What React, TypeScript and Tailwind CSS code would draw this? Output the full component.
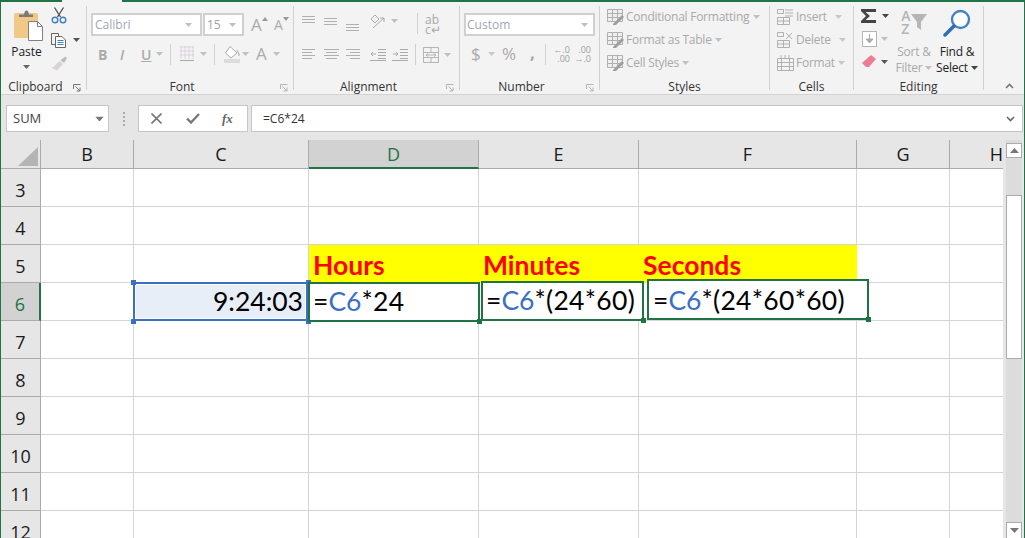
import React from "react";

function Caret({ color = "#a8a8a8", className = "" }: { color?: string; className?: string }) {
  return (
    <svg width="7" height="4" viewBox="0 0 7 4" className={"shrink-0 " + className}>
      <path d="M0 0H7L3.5 4Z" fill={color} />
    </svg>
  );
}

function Launcher({ dark = false }: { dark?: boolean }) {
  const c = dark ? "#777" : "#b5b5b5";
  return (
    <svg width="8" height="8" viewBox="0 0 8 8" className="absolute right-[5px] bottom-[-2px]">
      <path d="M.5 5V.5H7.500M.5 .5" stroke={c} fill="none" />
      <path d="M2.500 2.500L7 7M7 3.500V7H3.500" stroke={c} fill="none" />
    </svg>
  );
}

function Lines({ rows, w = 15, h = 12 }: { rows: [number, number, number][]; w?: number; h?: number }) {
  return (
    <svg width={w} height={h} viewBox={`0 0 ${w} ${h}`} className="shrink-0">
      {rows.map(([x1, x2, y], i) => (
        <path key={i} d={`M${x1} ${y + 0.5}H${x2}`} stroke="#b0b0b0" />
      ))}
    </svg>
  );
}

function Group({
  w,
  label,
  launcher,
  dark,
  children,
}: {
  w: string;
  label: string;
  launcher?: boolean;
  dark?: boolean;
  children: React.ReactNode;
}) {
  return (
    <div className={"relative flex flex-col h-[84px] mt-[4px] border-r border-[#d0d0d0] shrink-0 " + w}>
      <div className="h-[72px] flex flex-col">{children}</div>
      <div className={"h-[12px] leading-[18px] text-center text-[12px] text-[#333] " + (launcher ? "pr-[16px]" : "")}>{label}</div>
      {launcher && <Launcher dark={dark} />}
    </div>
  );
}

function Clipboard() {
  return (
    <Group w="w-[86px]" label="Clipboard" launcher dark>
      <div className="flex">
        <div className="w-[48px] flex flex-col items-center pl-[3px] pt-[4px]">
          <svg width="30" height="31" viewBox="0 0 30 31" className="ml-[4px]">
            <rect x="0" y="3" width="24" height="25" rx="1.500" fill="#efc985" />
            <path d="M5 7V4.500H10Q10.500 .5 12.500 .5T15 4.500H19V7Z" fill="#7b7b7b" />
            <path d="M14.500 11.500H23.500L28.500 16.500V30.500H14.500Z" fill="#fff" stroke="#808080" />
            <path d="M23.500 11.500V16.500H28.500" fill="none" stroke="#808080" />
          </svg>
          <span className="text-[12px] leading-[16px] text-[#222] mt-[3px]">Paste</span>
          <Caret color="#666" className="mt-[5px]" />
        </div>
        <div className="flex flex-col pl-[2px] pt-[1px]">
          <svg width="16" height="17" viewBox="0 0 16 17">
            <path d="M3.500 .5L9.500 10M12.500 .5L6.500 10" stroke="#555" strokeWidth="1.400" fill="none" />
            <circle cx="4" cy="13" r="2.800" fill="none" stroke="#3f7fc0" strokeWidth="1.400" />
            <circle cx="12" cy="13" r="2.800" fill="none" stroke="#3f7fc0" strokeWidth="1.400" />
          </svg>
          <div className="flex items-center mt-[9px]">
            <svg width="16" height="15" viewBox="0 0 16 15">
              <path d="M.5 .5H7.500V3.500M4 11.500H.5V.5" fill="none" stroke="#666" />
              <path d="M4.500 3.500H11L14.500 7V14.500H4.500Z" fill="#fff" stroke="#666" />
              <path d="M6.500 7.500H12.500M6.500 9.500H12.500M6.500 11.500H12.500" stroke="#3f7fc0" />
            </svg>
            <Caret color="#555" className="ml-[6px] -mt-[1px]" />
          </div>
          <svg width="17" height="15" viewBox="0 0 17 15" className="mt-[8px]">
            <path d="M9 5L12 8L6 14.500L.5 11.500C3 11 5 9 5 8Z" fill="#d9d5d5" />
            <path d="M9.500 4L14.500 .5L16 2L13 7Z" fill="#bdb9b9" />
          </svg>
        </div>
      </div>
    </Group>
  );
}

function Font() {
  return (
    <Group w="w-[207px]" label="Font" launcher>
      <div className="flex items-center mt-[7px] h-[23px] pl-[4px]">
        <div className="w-[111px] h-[23px] border-2 border-[#d0d0d0] bg-white flex items-center justify-between pl-[2px] pr-[8px]">
          <span className="text-[12px] text-[#9ea7b3]">Calibri</span>
          <Caret color="#c0c0c0" />
        </div>
        <div className="w-[41px] h-[23px] ml-[1px] border-2 border-[#d0d0d0] bg-white flex items-center justify-between pl-[2px] pr-[6px]">
          <span className="text-[12px] text-[#a49db0]">15</span>
          <Caret color="#c0c0c0" />
        </div>
        <span className="ml-[7px] w-[22px] flex items-start text-[17px] leading-[20px] text-[#ababab]">
          A<svg width="6" height="4" viewBox="0 0 6 4" className="mt-[2px]"><path d="M0 4H6L3 0Z" fill="#999" /></svg>
        </span>
        <span className="ml-[1px] flex items-start text-[14px] leading-[20px] text-[#ababab]">
          A<svg width="6" height="4" viewBox="0 0 6 4" className="mt-[2px]"><path d="M0 0H6L3 4Z" fill="#999" /></svg>
        </span>
      </div>
      <div className="flex items-center mt-[7px] h-[22px] pl-[10px] text-[#ababab]">
        <span className="w-[21px] text-[14px] font-bold pl-[1px]">B</span>
        <span className="w-[21px] text-[14px] italic font-semibold pl-[2px]">I</span>
        <span className="w-[17px] text-[14px] font-semibold underline pl-[2px]">U</span>
        <Caret color="#c0c0c0" />
        <div className="ml-[7px] w-px h-[21px] bg-[#d0d0d0]" />
        <svg width="14" height="16" viewBox="0 0 14 16" className="ml-[9px]">
          <path d="M.5 1H14M.5 5H14M.5 9H14M1 .5V13M5 .5V13M9 .5V13M13 .5V13" stroke="#c9b6c9" strokeDasharray="1 1" />
          <path d="M0 14.500H14" stroke="#a9a9a9" />
        </svg>
        <Caret color="#c0c0c0" className="ml-[6px]" />
        <div className="ml-[7px] w-px h-[21px] bg-[#d0d0d0]" />
        <svg width="16" height="17" viewBox="0 0 16 17" className="ml-[9px]">
          <path d="M6 .5L13 7L7 12L1.500 7Z" fill="#fff" stroke="#ababab" />
          <path d="M13 4L15 8V10" stroke="#ababab" fill="none" />
          <rect x="0" y="13" width="16" height="4" fill="#dcdcdc" />
        </svg>
        <Caret color="#c0c0c0" className="ml-[2px]" />
        <span className="ml-[7px] w-[14px] text-[17px] leading-[20px] font-normal">A</span>
        <Caret color="#c0c0c0" className="ml-[3px]" />
      </div>
    </Group>
  );
}

function Alignment() {
  const top: [number, number, number][] = [[0, 13, 1], [0, 13, 4], [0, 13, 7]];
  const mid: [number, number, number][] = [[0, 13, 3], [0, 13, 6], [0, 13, 9]];
  const bot: [number, number, number][] = [[0, 13, 5], [0, 13, 8], [0, 13, 11]];
  return (
    <Group w="w-[166px]" label="Alignment" launcher>
      <div className="flex h-[28px] pl-[8px] pt-[9px]">
        <Lines rows={top} w={16} />
        <div className="ml-[6px]"><Lines rows={mid} w={16} /></div>
        <div className="ml-[6px] mt-[4px]"><Lines rows={bot} w={16} /></div>
        <svg width="16" height="16" viewBox="0 0 16 16" className="ml-[8px] -mt-[1px]">
          <path d="M1 5L5 1L9 5L5 9Z" fill="none" stroke="#aaa" />
          <path d="M3 14L14 4M14 4H10M14 4V8" fill="none" stroke="#aaa" />
        </svg>
        <Caret color="#c0c0c0" className="ml-[5px] mt-[4px]" />
        <div className="ml-[19px] w-px h-[21px] -mt-[2px] bg-[#d0d0d0]" />
        <div className="ml-[7px] flex flex-col text-[12px] leading-[10px] font-medium text-[#a8a8a8]">
          <span>ab</span>
          <span>c↵</span>
        </div>
      </div>
      <div className="flex items-center h-[22px] mt-[10px] pl-[8px]">
        <Lines rows={[[0, 13, 0], [0, 10, 3], [0, 13, 6], [0, 10, 9]]} w={16} />
        <div className="ml-[6px]"><Lines rows={[[0, 15, 0], [2, 13, 3], [0, 15, 6], [2, 13, 9]]} w={16} /></div>
        <div className="ml-[6px]"><Lines rows={[[0, 14, 0], [4, 14, 3], [0, 14, 6], [4, 14, 9]]} w={16} /></div>
        <svg width="16" height="12" viewBox="0 0 16 12" className="ml-[8px]">
          <path d="M8 .5H16M8 3.500H16M8 6.500H16M8 9.500H16M0 11.500H16M6 5H1M3 3L1 5L3 7" stroke="#aaa" fill="none" />
        </svg>
        <svg width="16" height="12" viewBox="0 0 16 12" className="ml-[6px]">
          <path d="M8 .5H16M8 3.500H16M8 6.500H16M8 9.500H16M0 11.500H16M1 5H6M4 3L6 5L4 7" stroke="#aaa" fill="none" />
        </svg>
        <div className="ml-[7px] w-px h-[21px] -mt-[2px] bg-[#d0d0d0]" />
        <svg width="16" height="16" viewBox="0 0 16 16" className="ml-[7px] -mt-[1px]">
          <path d="M.5 .5H15.500V15.500H.5ZM.5 5.500H15.500M.5 10.500H15.500M8 .5V5.500M8 10.500V15.500" fill="none" stroke="#b5b5b5" />
          <path d="M3 8H13M3 8L5 6.500M3 8L5 9.500M13 8L11 6.500M13 8L11 9.500" stroke="#b5b5b5" fill="none" />
        </svg>
        <Caret color="#c0c0c0" className="ml-[5px]" />
      </div>
    </Group>
  );
}

function NumberGroup() {
  return (
    <Group w="w-[140px]" label="Number" launcher>
      <div className="mt-[7px] ml-[4px] w-[131px] h-[23px] border-2 border-[#d0d0d0] bg-white flex items-center justify-between pl-[1px] pr-[5px]">
        <span className="text-[12px] text-[#9ea7b3]">Custom</span>
        <Caret color="#c0c0c0" />
      </div>
      <div className="flex items-center h-[22px] mt-[7px] pl-[11px] text-[#aaa]">
        <span className="text-[17px] leading-[20px] w-[13px]">$</span>
        <Caret color="#c8c8c8" className="ml-[4px]" />
        <span className="text-[17px] leading-[20px] ml-[7px] w-[20px]">%</span>
        <span className="text-[17px] leading-[20px] font-bold ml-[8px] w-[9px] -mt-[3px]">,</span>
        <div className="ml-[6px] w-px h-[21px] bg-[#d0d0d0]" />
        <div className="ml-[7px] w-[17px] flex flex-col text-[9px] leading-[9px] items-end text-[#a0a0a0]">
          <span>←.0</span>
          <span>.00</span>
        </div>
        <div className="ml-[5px] w-[16px] flex flex-col text-[9px] leading-[9px] items-end text-[#a0a0a0]">
          <span>.00</span>
          <span>→.0</span>
        </div>
      </div>
    </Group>
  );
}

function TableIcon({ extra }: { extra?: React.ReactNode }) {
  return (
    <svg width="17" height="16" viewBox="0 0 17 16" className="shrink-0">
      <path d="M.5 .5H15.500V12.500H.5ZM.5 4.500H15.500M.5 8.500H15.500M5.500 .5V12.500M10.500 .5V12.500" fill="#eee" stroke="#b0b0b0" />
      {extra ?? <path d="M6 15L15 6L17 8L9 16H6Z" fill="#9e9e9e" />}
    </svg>
  );
}

function StyleRow({ label, caret }: { label: string; caret?: string }) {
  return (
    <div className="flex items-center h-[23px] pl-[7px]">
      <TableIcon />
      <span className="ml-[2px] text-[12px] tracking-[-0.25px] text-[#a9a9a9] whitespace-nowrap">{label}</span>
      {caret && <Caret color="#c0c0c0" className={caret} />}
    </div>
  );
}

function Styles() {
  return (
    <Group w="w-[170px]" label="Styles">
      <div className="-mt-[1px]">
        <StyleRow label="Conditional Formatting" caret="ml-[4px]" />
        <StyleRow label="Format as Table" caret="ml-[3px]" />
        <StyleRow label="Cell Styles" caret="ml-[3px]" />
      </div>
    </Group>
  );
}

function CellRow({ label, caret, d }: { label: string; caret: string; d: string }) {
  return (
    <div className="flex items-center h-[23px] pl-[7px]">
      <svg width="17" height="16" viewBox="0 0 17 16" className="shrink-0">
        <path d={d} fill="none" stroke="#b0b0b0" />
      </svg>
      <span className="ml-[2px] text-[12px] tracking-[-0.25px] text-[#a9a9a9]">{label}</span>
      <Caret color="#c8c8c8" className={caret} />
    </div>
  );
}

function Cells() {
  return (
    <Group w="w-[84px]" label="Cells">
      <div className="-mt-[1px]">
        <CellRow label="Insert" caret="ml-[8px]" d="M.5 .5H6.500V4.500H.5ZM.5 8.500H12.500V15.500H.5ZM6.500 8.500V15.500M.5 12H12.500M8 4H16M8 7H16M8 1H16" />
        <CellRow label="Delete" caret="ml-[8px]" d="M.5 .5H6.500V4.500H.5ZM.5 8.500H12.500V15.500H.5ZM6.500 8.500V15.500M.5 12H12.500M9 1L15 7M15 1L9 7" />
        <CellRow label="Format" caret="ml-[3px]" d="M.5 3.500H16.500V15.500H.5ZM.5 7.500H16.500M.5 11.500H16.500M4.500 3.500V15.500M12.500 3.500V15.500M4 0V3M8 0V3M12 0V3" />
      </div>
    </Group>
  );
}

function Editing() {
  return (
    <Group w="w-[130px]" label="Editing">
      <div className="flex">
        <div className="w-[39px] pl-[7px] flex flex-col pt-[3px]">
          <div className="flex items-center h-[14px]">
            <svg width="15" height="14" viewBox="0 0 15 14" role="img" aria-label="AutoSum">
              <path d="M0 0H15V3H4.500L9 7L4.500 11H15V14H0V12L5 7L0 2Z" fill="#444" />
            </svg>
            <Caret color="#444" className="ml-[6px]" />
          </div>
          <div className="flex items-center mt-[8px]">
            <svg width="15" height="16" viewBox="0 0 15 16" className="ml-[1px]">
              <rect x=".5" y=".5" width="14" height="15" fill="#fff" stroke="#b5b5b5" />
              <path d="M7.500 3V11M4 8L7.500 12L11 8Z" stroke="#aaa" fill="#aaa" />
            </svg>
            <Caret color="#c0c0c0" className="ml-[4px]" />
          </div>
          <div className="flex items-center mt-[8px]">
            <svg width="14" height="13" viewBox="0 0 14 13" className="ml-[1px]">
              <path d="M9 0L14 4L7 12H4L0 8Z" fill="#ec7d92" />
            </svg>
            <Caret color="#555" className="ml-[5px]" />
          </div>
        </div>
        <div className="w-[42px] flex flex-col items-center pt-[3px] text-[12px] leading-[16px] text-[#a9a9a9]">
          <div className="flex items-start h-[29px]">
            <div className="flex flex-col text-[14px] leading-[13px] font-semibold text-[#b5b5b5]">
              <span>A</span>
              <span>Z</span>
            </div>
            <svg width="16" height="16" viewBox="0 0 16 16" className="mt-[5px]">
              <path d="M0 0H16L10 8V16L6 13V8Z" fill="#b5b5b5" />
            </svg>
          </div>
          <span className="mt-[6px] tracking-[-0.2px]">Sort &amp;</span>
          <span className="flex items-center tracking-[-0.2px]">
            Filter<Caret color="#c0c0c0" className="ml-[3px]" />
          </span>
        </div>
        <div className="w-[44px] flex flex-col items-center pt-[3px] text-[12px] leading-[16px] text-[#222]">
          <svg width="28" height="29" viewBox="0 0 28 29">
            <circle cx="17.500" cy="10.500" r="8.500" fill="#fff" stroke="#3f82c4" strokeWidth="2.400" />
            <path d="M11 17L2 26" stroke="#2f6fb0" strokeWidth="3.500" strokeLinecap="round" />
          </svg>
          <span className="mt-[6px] whitespace-nowrap tracking-[-0.2px]">Find &amp;</span>
          <span className="flex items-center whitespace-nowrap tracking-[-0.2px]">
            Select<Caret color="#444" className="ml-[3px]" />
          </span>
        </div>
      </div>
    </Group>
  );
}

function FormulaBar() {
  return (
    <div className="flex h-[45px] pt-[10px] pl-[5px] pr-[1px] bg-[#e6e6e6] shrink-0">
      <div className="w-[103px] h-[27px] bg-white border border-[#c6c6c6] flex items-center justify-between pl-[6px] pr-[5px]">
        <span className="text-[13px] text-[#444]">SUM</span>
        <Caret color="#777" className="scale-125" />
      </div>
      <div className="w-[29px] flex flex-col items-center justify-center gap-[2px] h-[27px]">
        <span className="w-[2px] h-[2px] bg-[#aaa]" />
        <span className="w-[2px] h-[2px] bg-[#aaa]" />
        <span className="w-[2px] h-[2px] bg-[#aaa]" />
        <span className="w-[2px] h-[2px] bg-[#aaa]" />
      </div>
      <div className="w-[110px] h-[27px] bg-white border border-[#c6c6c6] flex items-center pl-[12px]">
        <svg width="11" height="11" viewBox="0 0 11 11">
          <path d="M.5 .5L10.500 10.500M10.500 .5L.5 10.500" stroke="#777" strokeWidth="1.600" />
        </svg>
        <svg width="14" height="11" viewBox="0 0 14 11" className="ml-[24px]">
          <path d="M1 5.500L5 9.500L13 1" fill="none" stroke="#777" strokeWidth="2.400" />
        </svg>
        <span
          className="ml-[22px] text-[13px] leading-none italic font-bold text-[#666]"
          style={{ fontFamily: "'Liberation Serif', serif" }}
        >
          fx
        </span>
      </div>
      <div className="ml-[3px] w-[772px] h-[27px] bg-white border border-[#c6c6c6] flex items-center justify-between pl-[11px] pr-[7px]">
        <span className="text-[12px] text-[#333]">=C6*24</span>
        <svg width="9" height="6" viewBox="0 0 9 6">
          <path d="M1 1L4.500 4.500L8 1" stroke="#666" strokeWidth="1.600" fill="none" />
        </svg>
      </div>
    </div>
  );
}

const COLS = ["B", "C", "D", "E", "F", "G", "H"];
const ROWS = [3, 4, 5, 6, 7, 8, 9, 10, 11, 12];

function Sheet() {
  return (
    <div className="relative w-[1002px] h-[398px] overflow-hidden shrink-0 grid grid-cols-[40px_93px_175px_170px_160px_218px_93px_53px] auto-rows-[38px] grid-rows-[29px] bg-white">
      <div className="bg-[#e6e6e6] border-r border-b border-[#ababab] flex items-end justify-end pr-[2px] pb-[2px]">
        <svg width="20" height="19" viewBox="0 0 20 19">
          <path d="M20 0V19H0Z" fill="#b4b4b4" />
        </svg>
      </div>
      {COLS.map((c) => (
        <div
          key={c}
          className={
            "flex items-center text-[18px] leading-none border-b " +
            (c === "H" ? "justify-end border-[#ababab] bg-[#e6e6e6] text-[#1a1a1a]" : "justify-center border-r ") +
            (c === "D"
              ? "bg-[#d2d2d2] text-[#217346] border-r-[#ababab] border-b-2 border-b-[#217346]"
              : c === "H"
              ? ""
              : "bg-[#e6e6e6] text-[#1a1a1a] border-[#ababab]")
          }
        >
          {c}
        </div>
      ))}
      {ROWS.map((r) => (
        <React.Fragment key={r}>
          <div
            className={
              "flex items-start justify-center pt-[11px] text-[18px] leading-[20px] border-b border-[#ababab] " +
              (r === 6
                ? "bg-[#d2d2d2] text-[#217346] border-r-2 border-r-[#217346]"
                : "bg-[#e6e6e6] text-[#1a1a1a] border-r")
            }
          >
            {r}
          </div>
          {COLS.map((c) => {
            const yellow = r === 5 && (c === "D" || c === "E" || c === "F");
            const label = yellow ? (c === "D" ? "Hours" : c === "E" ? "Minutes" : "Seconds") : "";
            return (
              <div
                key={c}
                className={
                  yellow
                    ? "bg-[#ffff00] flex items-center pl-[4px] pt-[2px] text-[#ff0000] font-bold text-[26.5px] leading-none"
                    : "bg-white border-b border-[#d4d4d4] " + (c === "H" ? "" : "border-r")
                }
                style={yellow ? { fontFamily: "Lato, sans-serif" } : undefined}
              >
                {label}
              </div>
            );
          })}
        </React.Fragment>
      ))}

      <div className="absolute left-[132px] top-[142px] w-[175px] h-[39px] bg-[#e8eef8] border-2 border-[#3a6fc4] shadow-[inset_0_0_0_1px_white] flex items-center justify-end pr-[3px] text-[26.5px] text-black" style={{ fontFamily: "Lato, sans-serif" }}>
        9:24:03
      </div>
      <Handle className="left-[130px] top-[140px] bg-[#3a6fc4]" />
      <Handle className="left-[305px] top-[140px] bg-[#3a6fc4]" />
      <Handle className="left-[130px] top-[179px] bg-[#3a6fc4]" />
      <Handle className="left-[305px] top-[179px] bg-[#3a6fc4]" />

      <Formula className="left-[307px] top-[142px] w-[172px] h-[40px] pl-[3px]" rest="*24" />
      <Handle className="left-[476px] top-[179px] bg-[#217346]" />
      <Formula className="left-[480px] top-[141px] w-[163px] h-[40px] pl-[3px]" rest="*(24*60)" />
      <Handle className="left-[640px] top-[178px] bg-[#217346]" />
      <Formula className="left-[646px] top-[139px] w-[222px] h-[41px] pl-[4px] pt-[2px]" rest="*(24*60*60)" />
      <Handle className="left-[865px] top-[177px] bg-[#217346]" />
    </div>
  );
}

function Handle({ className }: { className: string }) {
  return <div className={"absolute w-[5px] h-[5px] " + className} />;
}

function Formula({ className, rest }: { className: string; rest: string }) {
  return (
    <div
      className={"absolute border-2 border-[#217346] bg-white flex items-center text-[26.5px] text-black whitespace-nowrap " + className}
      style={{ fontFamily: "Lato, sans-serif" }}
    >
      =<span className="text-[#3a6fc4]">C6</span>
      <span className="tracking-[0.3px]">{rest}</span>
    </div>
  );
}

function Scrollbar() {
  return (
    <div className="w-[21px] h-[398px] pl-[3px] pr-[2px] shrink-0 overflow-hidden">
      <div className="h-[400px] bg-[#dcdcdc] flex flex-col">
        <div className="mt-[3px] h-[15px] bg-white border border-[#ababab] flex items-center justify-center">
          <svg width="9" height="5" viewBox="0 0 9 5">
            <path d="M0 5H9L4.500 0Z" fill="#777" />
          </svg>
        </div>
        <div className="mt-[37px] h-[164px] bg-white border border-[#ababab]" />
        <div className="mt-auto mb-[1px] h-[17px] bg-white border border-[#ababab] flex items-center justify-center">
          <svg width="9" height="5" viewBox="0 0 9 5">
            <path d="M0 0H9L4.500 5Z" fill="#777" />
          </svg>
        </div>
      </div>
    </div>
  );
}

export default function App() {
  return (
    <div
      className="relative w-[1025px] h-[538px] overflow-hidden flex flex-col bg-[#e6e6e6] border-x border-[#217346]"
      style={{ fontFamily: "'Open Sans', 'Noto Sans', sans-serif" }}
    >
      <div className="flex h-[2px] shrink-0 bg-[#217346]">
        <div className="ml-[61px] w-[60px] bg-[#f3f3f3]" />
      </div>
      <div className="flex h-[93px] shrink-0 bg-[#f3f3f3] border-b border-[#d2d2d2]">
        <Clipboard />
        <Font />
        <Alignment />
        <NumberGroup />
        <Styles />
        <Cells />
        <Editing />
        <div className="flex-1 flex items-end justify-center pb-[5px] pl-[10px]">
          <svg width="9" height="6" viewBox="0 0 9 6">
            <path d="M1 5L4.500 1.500L8 5" stroke="#777" strokeWidth="1.600" fill="none" />
          </svg>
        </div>
      </div>
      <FormulaBar />
      <div className="flex h-[398px] shrink-0">
        <Sheet />
        <Scrollbar />
      </div>
    </div>
  );
}
